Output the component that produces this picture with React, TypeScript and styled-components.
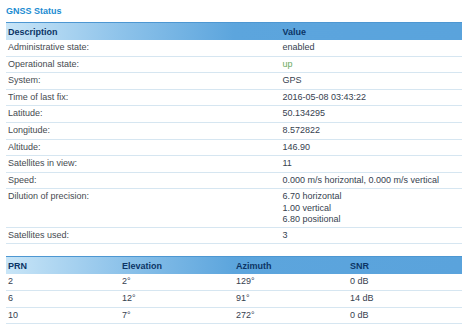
import styled, { createGlobalStyle } from "styled-components";

const GlobalStyle = createGlobalStyle`
  body {
    margin: 0;
    background: #ffffff;
    font-family: "Liberation Sans", Arial, sans-serif;
  }
`;

const status: [string, string | string[], boolean?][] = [
  ["Administrative state:", "enabled"],
  ["Operational state:", "up", true],
  ["System:", "GPS"],
  ["Time of last fix:", "2016-05-08 03:43:22"],
  ["Latitude:", "50.134295"],
  ["Longitude:", "8.572822"],
  ["Altitude:", "146.90"],
  ["Satellites in view:", "11"],
  ["Speed:", "0.000 m/s horizontal, 0.000 m/s vertical"],
  ["Dilution of precision:", ["6.70 horizontal", "1.00 vertical", "6.80 positional"]],
  ["Satellites used:", "3"],
];

const sats = [
  ["2", "2°", "129°", "0 dB"],
  ["6", "12°", "91°", "14 dB"],
  ["10", "7°", "272°", "0 dB"],
];

export default function App() {
  return (
    <>
      <GlobalStyle />
      <Page>
        <Title>GNSS Status</Title>
        <Table>
          <colgroup>
            <col style={{ width: "60.2%" }} />
            <col />
          </colgroup>
          <thead>
            <tr>
              <Th>Description</Th>
              <Th>Value</Th>
            </tr>
          </thead>
          <tbody>
            {status.map(([label, value, ok]) => (
              <tr key={label}>
                <Label>{label}</Label>
                <Value $ok={ok}>
                  {Array.isArray(value)
                    ? value.map((v) => <Line key={v}>{v}</Line>)
                    : value}
                </Value>
              </tr>
            ))}
          </tbody>
        </Table>
        <SatTable>
          <thead>
            <tr>
              <Th>PRN</Th>
              <Th>Elevation</Th>
              <Th>Azimuth</Th>
              <Th>SNR</Th>
            </tr>
          </thead>
          <tbody>
            {sats.map((row) => (
              <tr key={row[0]}>
                {row.map((c, i) => (
                  <Value key={i}>{c}</Value>
                ))}
              </tr>
            ))}
          </tbody>
        </SatTable>
      </Page>
    </>
  );
}

const Page = styled.div`
  padding: 4px 12px 0 6px;
`;

const Title = styled.h2`
  margin: 0;
  height: 18px;
  line-height: 14px;
  font-size: 9px;
  font-weight: bold;
  color: #1b8bd1;
`;

const Table = styled.table`
  width: 100%;
  border-collapse: collapse;
  table-layout: fixed;
  font-size: 9px;

  thead tr {
    background: linear-gradient(to right, #c8e5f7 0%, #8ec3ea 25%, #5ca5dd 50%, #5aa3dc 100%);
    border-top: 1px solid #4d97d2;
  }
`;

const SatTable = styled(Table)`
  margin-top: 12px;
`;

const Th = styled.th`
  text-align: left;
  height: 17px;
  padding: 0 2px;
  font-weight: bold;
  color: #0c3566;
`;

const Label = styled.td`
  height: 15.6px;
  padding: 0 2px;
  color: #464a50;
  border-bottom: 1px solid #d6e6f1;
  vertical-align: top;
  line-height: 15.6px;
`;

const Value = styled.td<{ $ok?: boolean }>`
  height: 15.6px;
  padding: 0 2px;
  color: ${(p) => (p.$ok ? "#6aaa5e" : "#36414f")};
  border-bottom: 1px solid #d6e6f1;
  vertical-align: top;
  line-height: 15.6px;
`;

const Line = styled.div`
  line-height: 11.5px;
  &:first-child {
    padding-top: 2px;
  }
  &:last-child {
    padding-bottom: 1px;
  }
`;
